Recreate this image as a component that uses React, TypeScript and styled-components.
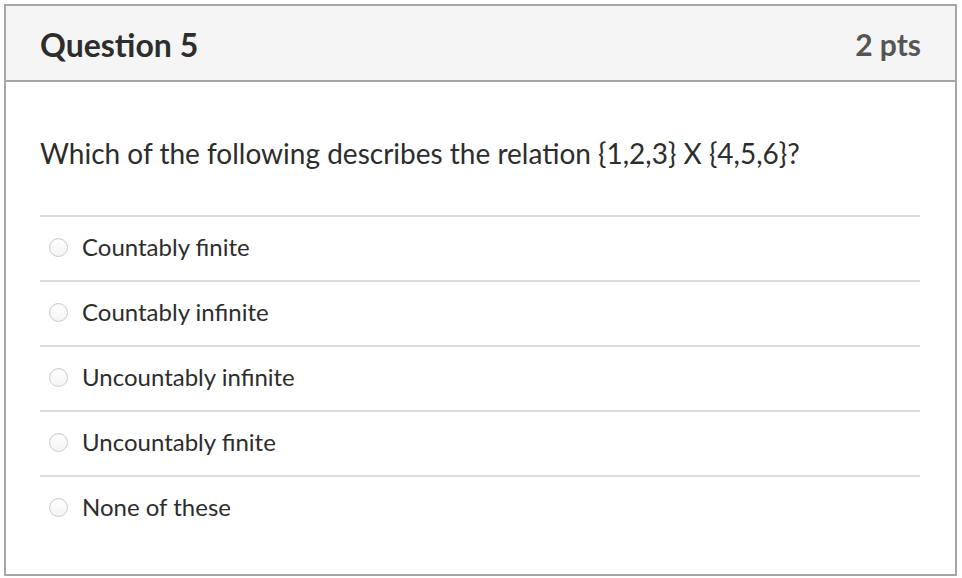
import React from "react";
import styled, { createGlobalStyle } from "styled-components";

const GlobalStyle = createGlobalStyle`
  html, body {
    margin: 0;
    padding: 0;
    background: #ffffff;
    font-family: Lato, "Liberation Sans", sans-serif;
  }
`;

const Card = styled.div`
  margin: 4px;
  width: 949px;
  height: 568px;
  border: 2px solid #a6a6a6;
  background: #ffffff;
  overflow: hidden;
`;

const Header = styled.div`
  height: 72px;
  display: flex;
  align-items: center;
  justify-content: space-between;
  padding: 2px 34px 0 34px;
  background: #f5f5f5;
  border-bottom: 2px solid #a6a6a6;
`;

const Title = styled.h2`
  margin: 0;
  font-size: 32px;
  font-weight: 700;
  color: #2d2d2d;
`;

const Points = styled.span`
  font-size: 30px;
  font-weight: 700;
  color: #555555;
`;

const Body = styled.div`
  padding: 51px 35px 0 34px;
`;

const QuestionText = styled.p`
  margin: 0 0 42px;
  font-size: 28px;
  line-height: 40px;
  color: #2d2d2d;
`;

const Answers = styled.ul`
  list-style: none;
  margin: 0;
  padding: 0;
`;

const Answer = styled.li`
  height: 63px;
  display: flex;
  align-items: center;
  gap: 14px;
  padding-left: 9px;
  border-top: 2px solid #dcdcdc;
`;

const Radio = styled.span`
  width: 17px;
  height: 17px;
  border-radius: 50%;
  border: 1px solid #cccccc;
  background: linear-gradient(#ffffff, #f4f4f4);
  box-shadow: inset 0 1px 1px rgba(0, 0, 0, 0.05);
  flex-shrink: 0;
  margin-top: -2px;
`;

const AnswerLabel = styled.span`
  font-size: 24px;
  color: #2d2d2d;
  margin-top: -4px;
`;

const options = [
  "Countably finite",
  "Countably infinite",
  "Uncountably infinite",
  "Uncountably finite",
  "None of these",
];

export default function App() {
  return (
    <>
      <GlobalStyle />
      <Card>
        <Header>
          <Title>Question 5</Title>
          <Points>2 pts</Points>
        </Header>
        <Body>
          <QuestionText>
            Which of the following describes the relation {"{1,2,3}"} X {"{4,5,6}"}?
          </QuestionText>
          <Answers>
            {options.map((o) => (
              <Answer key={o}>
                <Radio />
                <AnswerLabel>{o}</AnswerLabel>
              </Answer>
            ))}
          </Answers>
        </Body>
      </Card>
    </>
  );
}
